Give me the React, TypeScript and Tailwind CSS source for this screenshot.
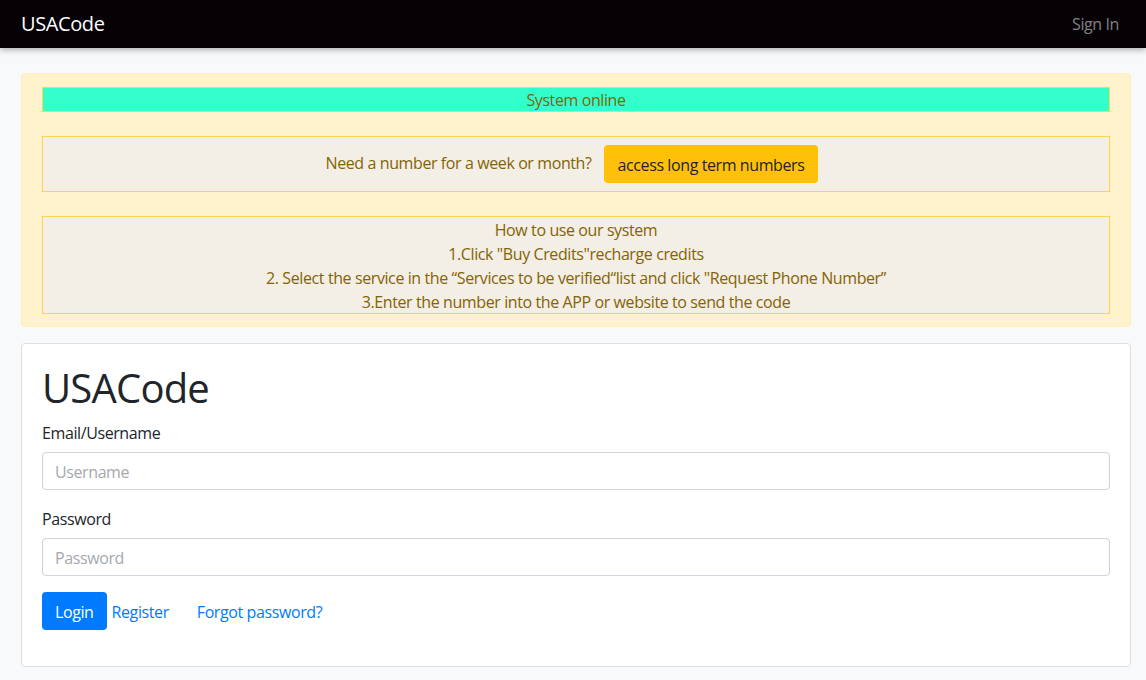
export default function App() {
  return (
    <div className="min-h-screen bg-[#f8f9fa] font-['Segoe_UI','Open_Sans',sans-serif] text-[16px] leading-[24px] tracking-[-0.4px] text-[#212529]">
      {/* Navbar */}
      <nav className="relative z-10 flex h-[48px] items-center justify-between bg-[#050105] pl-[21px] pr-[27px] shadow-[0_2px_6px_rgba(0,0,0,0.3)]">
        <span className="text-[20px] leading-[30px] text-white">USACode</span>
        <a className="text-[16px] text-[rgba(255,255,255,0.5)]">Sign In</a>
      </nav>

      <main className="pl-[21px] pr-[15px] pt-[25px] pb-[16px]">
        {/* Notice */}
        <div className="rounded-[4px] border border-[#ffeeba] bg-[#fff3cd] px-[20px] pt-[13px] pb-[12px] text-[#856404]">
          <div className="border border-[#ffd54f] bg-[#33ffcc] pt-[1px] text-center leading-[22px]">System online</div>

          <div className="mt-[24px] flex items-center justify-center gap-[12px] border border-[#ffd54f] bg-[#f3eee6] py-[8px] pr-[8px]">
            <span className="-mt-[2px]">Need a number for a week or month?</span>
            <button className="h-[38px] rounded-[4px] bg-[#ffc107] px-[14px] pt-[2px] text-[#212529]">access long term numbers</button>
          </div>

          <div className="mt-[24px] border border-[#ffd54f] bg-[#f3eee6] pt-[1px] text-center">
            <p>How to use our system</p>
            <p>1.Click "Buy Credits"recharge credits</p>
            <p>2. Select the service in the “Services to be verified“list and click "Request Phone Number”</p>
            <p className="-mb-[1px]">3.Enter the number into the APP or website to send the code</p>
          </div>
        </div>

        {/* Login card */}
        <div className="mt-[16px] rounded-[4px] border border-[#dfdfdf] bg-white p-[20px] pb-[36px]">
          <h1 className="mb-[8px] text-[40px] leading-[48px] font-normal tracking-[-0.8px]">USACode</h1>
          <div className="mb-[16px]">
            <label className="block h-[24px] pt-[1px]">Email/Username</label>
            <input
              placeholder="Username"
              className="mt-[8px] block h-[38px] w-full rounded-[4px] border border-[#ced4da] px-[12px] pt-[1px] text-[#495057] placeholder:text-[#a5a9ad] outline-none"
            />
          </div>
          <div className="mb-[16px]">
            <label className="block h-[24px] pt-[1px]">Password</label>
            <input
              type="password"
              placeholder="Password"
              className="mt-[8px] block h-[38px] w-full rounded-[4px] border border-[#ced4da] px-[12px] pt-[1px] text-[#495057] placeholder:text-[#a5a9ad] outline-none"
            />
          </div>
          <div className="flex items-center">
            <button className="h-[38px] rounded-[4px] bg-[#007bff] px-[13px] pt-[1px] text-white">Login</button>
            <a className="ml-[5px] pt-[1px] text-[#007bff]">Register</a>
            <a className="ml-[28px] pt-[1px] text-[#007bff]">Forgot password?</a>
          </div>
        </div>
      </main>
    </div>
  );
}
